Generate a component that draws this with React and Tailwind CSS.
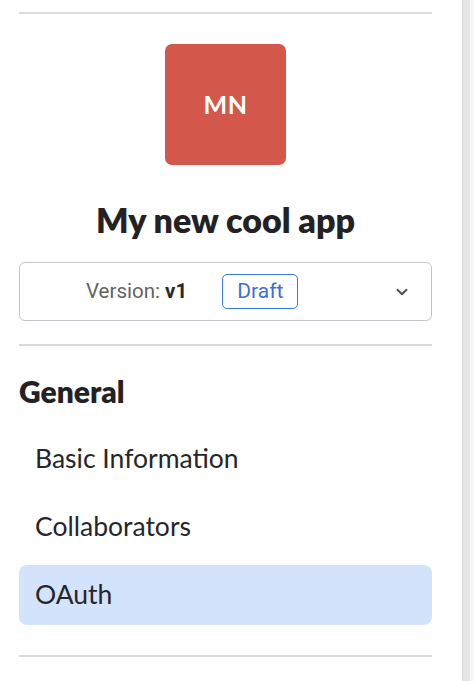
import React from "react";

export default function App() {
  return (
    <div className="flex w-[474px] h-[681px] bg-white overflow-hidden" style={{ fontFamily: "Lato, 'Noto Sans', sans-serif" }}>
      <div className="w-[462px] shrink-0 pl-[19px] pr-[30px] flex flex-col">
        <div className="mt-[12px] h-[2px] bg-[#d9d9e0]" />
        <div className="mt-[30px] flex justify-center">
          <div className="w-[121px] h-[121px] rounded-[7px] bg-[#d4574b] flex items-center justify-center text-white text-[25px] font-bold tracking-[0.5px]">
            MN
          </div>
        </div>
        <div className="mt-[36px] text-center text-[34px] leading-[38px] font-extrabold text-[#222226]">
          My new cool app
        </div>
        <div className="mt-[23px] h-[59px] rounded-[6px] border border-[#c4c4cc] flex items-center relative" style={{ fontFamily: "Roboto, sans-serif" }}>
          <div className="ml-[66px] text-[20.5px] text-[#5f6368]">
            Version: <span className="font-bold text-[#2a2a2e]">v1</span>
          </div>
          <div className="ml-[35px] h-[35px] px-[14px] rounded-[5px] border-[1.5px] border-[#3b78dc] text-[#3b6fd4] text-[21px] flex items-center">
            Draft
          </div>
          <svg className="ml-auto mr-[20px]" width="18" height="18" viewBox="0 0 24 24" fill="none" stroke="#4a4a50" strokeWidth="2.4" strokeLinecap="round" strokeLinejoin="round">
            <path d="M6 9l6 6 6-6" />
          </svg>
        </div>
        <div className="mt-[23px] h-[2px] bg-[#d9d9e0]" />
        <div className="mt-[27px] text-[30px] leading-[36px] font-extrabold text-[#222226]">General</div>
        <div className="mt-[20px] flex flex-col gap-[8px]">
          <div className="h-[60px] rounded-[8px] px-[16px] flex items-center text-[26.5px] text-[#26262a]">Basic Information</div>
          <div className="h-[60px] rounded-[8px] px-[16px] flex items-center text-[26.5px] text-[#26262a]">Collaborators</div>
          <div className="h-[60px] rounded-[8px] px-[16px] flex items-center text-[26.5px] text-[#26262a] bg-[#d3e3fb]">OAuth</div>
        </div>
        <div className="mt-[30px] h-[2px] bg-[#d9d9e0]" />
      </div>
      <div className="w-[8px] shrink-0 bg-[#e6e6e6] border-l border-[#dadada]" />
      <div className="flex-1 bg-[#f6f6f6]" />
    </div>
  );
}
